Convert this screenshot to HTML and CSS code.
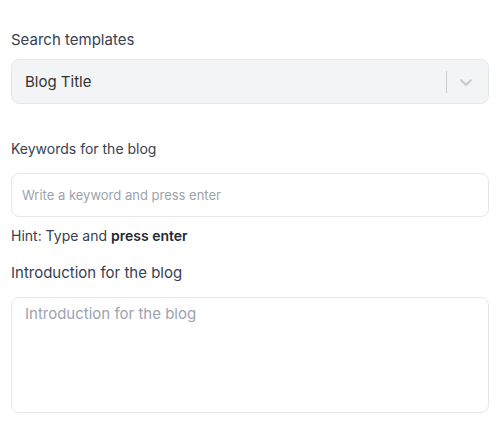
FILE: index.html
```html
<!DOCTYPE html>
<html lang="en">
<head>
  <meta charset="UTF-8">
  <meta name="viewport" content="width=device-width, initial-scale=1.0">
  <title>Blog generator</title>
  <link rel="stylesheet" href="styles.css">
</head>
<body>
  <div class="form">
    <!-- Scelta del template -->
    <label class="label label-lg">Search templates</label>
    <div class="select">
      <div class="select-value">Blog Title</div>
      <div class="select-indicators">
        <span class="select-separator"></span>
        <svg class="select-chevron" width="20" height="20" viewBox="0 0 20 20" aria-hidden="true">
          <path d="M4.516 7.548c0.436-0.446 1.043-0.481 1.576 0l3.908 3.747 3.908-3.747c0.533-0.481 1.141-0.446 1.574 0 0.436 0.445 0.408 1.197 0 1.615-0.406 0.418-4.695 4.502-4.695 4.502-0.217 0.223-0.502 0.335-0.787 0.335s-0.57-0.112-0.789-0.335c0 0-4.287-4.084-4.695-4.502s-0.436-1.17 0-1.615z"></path>
        </svg>
      </div>
    </div>

    <!-- Parole chiave -->
    <label class="label label-sm keywords-label" for="keywords">Keywords for the blog</label>
    <input type="text" id="keywords" class="field field-sm" placeholder="Write a keyword and press enter">
    <p class="hint">Hint: Type and <b>press enter</b></p>

    <!-- Introduzione -->
    <label class="label label-lg intro-label" for="intro">Introduction for the blog</label>
    <textarea id="intro" class="field area" placeholder="Introduction for the blog"></textarea>
  </div>
</body>
</html>
```

FILE: styles.css
```css
body {
  margin: 0;
  font-family: "Inter", "Liberation Sans", sans-serif;
  background-color: #ffffff;
  color: #374151;
}
.form {
  display: flex;
  flex-direction: column;
  padding: 28px 11px 0 11px;
}
.label {
  display: block;
  color: #374151;
}
.label-lg {
  font-size: 15px;
  line-height: 24px;
}
.label-sm {
  font-size: 14px;
  line-height: 20px;
}
/* Select stile react-select */
.select {
  display: flex;
  align-items: center;
  height: 45px;
  box-sizing: border-box;
  margin-top: 7px;
  background-color: #f3f4f6;
  border: 1px solid #e5e7eb;
  border-radius: 8px;
}
.select-value {
  flex: 1;
  padding-left: 13px;
  font-size: 15px;
  line-height: 24px;
  color: #333333;
}
.select-indicators {
  display: flex;
  align-items: center;
  align-self: stretch;
}
.select-separator {
  width: 1px;
  align-self: stretch;
  margin: 11px 0 10px 0;
  background-color: #cccccc;
}
.select-chevron {
  fill: #cccccc;
  padding: 0 12px 0 9px;
}
.keywords-label {
  margin-top: 35px;
}
.field {
  box-sizing: border-box;
  width: 100%;
  border: 1px solid #e5e7eb;
  border-radius: 8px;
  font-family: inherit;
  color: #374151;
  background-color: #ffffff;
  outline: none;
}
.field::placeholder {
  color: #9ca3af;
}
.field-sm {
  height: 44px;
  margin-top: 14px;
  padding: 0 10px;
  font-size: 13px;
}
.hint {
  margin: 9px 0 0 0;
  font-size: 14px;
  line-height: 20px;
  color: #374151;
}
.hint b {
  font-weight: 600;
  color: #1f2937;
}
.intro-label {
  margin-top: 15px;
}
.area {
  display: block;
  height: 116px;
  margin-top: 12px;
  padding: 4px 13px;
  font-size: 15px;
  line-height: 24px;
  resize: none;
}
```
